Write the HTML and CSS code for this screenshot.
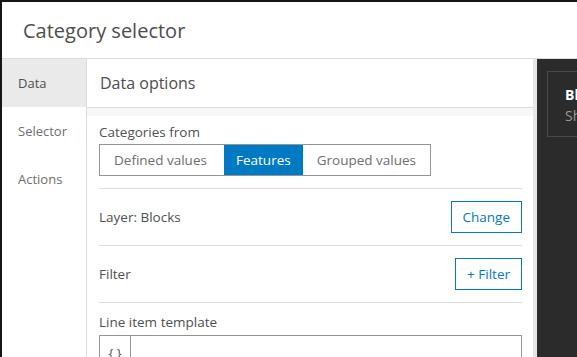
FILE: index.html
```html
<!DOCTYPE html>
<html>
<head>
<meta charset="utf-8">
<link rel="stylesheet" href="styles.css">
</head>
<body>
<div class="modal">
  <div class="modal-header">Category selector</div>
  <div class="modal-body">
    <nav class="nav">
      <div class="nav-item active">Data</div>
      <div class="nav-item">Selector</div>
      <div class="nav-item">Actions</div>
    </nav>
    <section class="main">
      <div class="main-header">Data options</div>
      <div class="band"></div>
      <div class="content">
        <div class="label">Categories from</div>
        <div class="segmented">
          <div class="seg">Defined values</div>
          <div class="seg selected">Features</div>
          <div class="seg">Grouped values</div>
        </div>
        <div class="row">
          <span>Layer: Blocks</span>
          <button class="btn">Change</button>
        </div>
        <div class="row">
          <span>Filter</span>
          <button class="btn">+ Filter</button>
        </div>
        <div class="label label-lit">Line item template</div>
        <div class="template">
          <div class="template-prefix">{ }</div>
          <div class="template-input"></div>
        </div>
      </div>
    </section>
    <div class="stripe"></div>
    <aside class="preview">
      <div class="card">
        <div class="card-title">Blocks</div>
        <div class="card-sub">Show</div>
      </div>
    </aside>
  </div>
</div>
</body>
</html>
```

FILE: styles.css
```css
html, body {
  margin: 0;
  padding: 0;
  height: 100%;
  overflow: hidden;
}
body {
  background: #161616;
  font-family: "Open Sans", "Noto Sans", sans-serif;
  color: #505050;
}
.modal {
  margin: 2px 0 0 2px;
  background: #ffffff;
  height: 355px;
  display: flex;
  flex-direction: column;
  overflow: hidden;
}
.modal-header {
  height: 56px;
  flex: none;
  display: flex;
  align-items: center;
  padding-left: 21px;
  font-size: 20px;
  color: #4e4e4e;
  border-bottom: 1px solid #dcdcdc;
}
.modal-body {
  flex: 1;
  display: flex;
  min-height: 0;
}
.nav {
  width: 84px;
  flex: none;
  border-right: 1px solid #dcdcdc;
}
.nav-item {
  height: 48px;
  display: flex;
  align-items: center;
  padding-left: 16px;
  font-size: 13px;
  color: #6e6e6e;
}
.nav-item.active {
  background: #eaeaea;
  color: #4e4e4e;
}
.main {
  width: 446px;
  flex: none;
  display: flex;
  flex-direction: column;
}
.main-header {
  height: 48px;
  display: flex;
  align-items: center;
  padding-left: 13px;
  font-size: 16px;
  color: #4e4e4e;
  border-bottom: 1px solid #dcdcdc;
  flex: none;
}
.band {
  height: 8px;
  background: #f7f7f7;
  flex: none;
}
.content {
  padding: 0 11px 0 12px;
}
.label {
  font-size: 13.5px;
  color: #505050;
  height: 20px;
  line-height: 20px;
  margin-top: 6px;
}
.segmented {
  display: inline-flex;
  margin-top: 2px;
  border: 1px solid #959595;
  height: 30px;
}
.seg {
  display: flex;
  align-items: center;
  padding: 0 14px;
  font-size: 13.5px;
  color: #6e6e6e;
}
.seg:first-child { width: 96px; }
.seg.selected {
  background: #007ac2;
  color: #ffffff;
  padding: 0 12px;
}
.row {
  margin-top: 12px;
  border-top: 1px solid #dcdcdc;
  padding: 12px 0;
  display: flex;
  align-items: center;
  justify-content: space-between;
  font-size: 13.5px;
  color: #505050;
}
.row + .row { margin-top: 0; }
.btn {
  height: 32px;
  border: 1px solid #007ac2;
  background: #fff;
  color: #007ac2;
  font-family: inherit;
  font-size: 13.5px;
  padding: 0 11px;
  margin: 0;
}
.label-lit {
  border-top: 1px solid #dcdcdc;
  margin-top: 0;
  padding-top: 9px;
}
.template {
  margin-top: 3px;
  display: flex;
  border: 1px solid #959595;
  height: 40px;
}
.template-prefix {
  width: 30px;
  border-right: 1px solid #959595;
  font-size: 13px;
  line-height: 16px;
  text-align: center;
  padding-top: 9px;
  color: #505050;
}
.template-input { flex: 1; }
.stripe {
  width: 4px;
  flex: none;
  background: #e6e6e6;
}
.preview {
  flex: 1;
  background: #2b2b2b;
  padding: 12px 0 0 10px;
  overflow: hidden;
}
.card {
  border: 1px solid #4a4a4a;
  border-right: none;
  height: 66px;
  padding: 13px 0 0 17px;
  box-sizing: border-box;
  white-space: nowrap;
}
.card-title {
  color: #ffffff;
  font-weight: 700;
  font-size: 14px;
  line-height: 20px;
}
.card-sub {
  color: #9a9a9a;
  font-size: 14px;
  line-height: 22px;
}
```
